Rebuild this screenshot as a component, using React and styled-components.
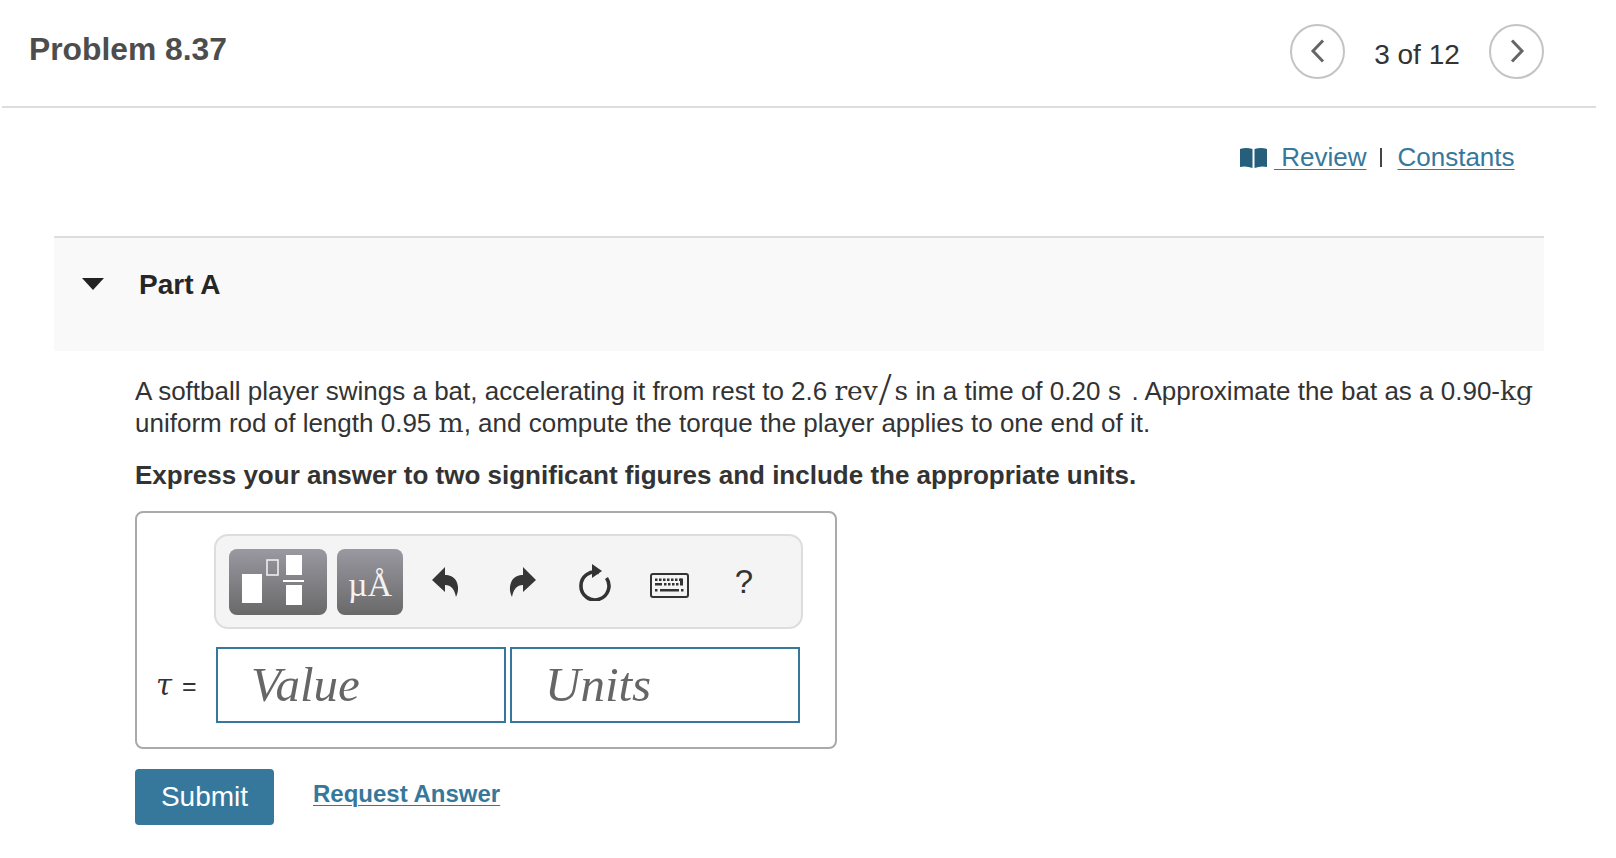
import React from 'react';
import styled, { createGlobalStyle } from 'styled-components';

const GlobalStyle = createGlobalStyle`
  html, body {
    margin: 0;
    padding: 0;
    background: #fff;
    font-family: "Liberation Sans", Arial, sans-serif;
    color: #333;
  }
`;

const Page = styled.div`
  width: 1616px;
  height: 858px;
  overflow: hidden;
`;

const Header = styled.header`
  margin-left: 2px;
  width: 1594px;
  height: 108px;
  box-sizing: border-box;
  border-bottom: 2px solid #ddd;
  padding: 24px 52px 0 27px;
  display: flex;
  justify-content: space-between;
  align-items: flex-start;
`;

const Title = styled.h1`
  margin: 7px 0 0;
  font-size: 31.8px;
  line-height: 36px;
  font-weight: 700;
  color: #4d4d4d;
`;

const Pager = styled.div`
  display: flex;
  align-items: center;
  height: 54px;
`;

const PagerText = styled.span`
  font-size: 28px;
  color: #333;
  width: 144px;
  text-align: center;
  padding-top: 7px;
`;

const RoundButton = styled.button`
  width: 55px;
  height: 55px;
  padding: 0;
  border: 2px solid #c4c4c4;
  border-radius: 50%;
  background: #fff;
  display: flex;
  align-items: center;
  justify-content: center;
`;

const LinkRow = styled.div`
  height: 128px;
  box-sizing: border-box;
  padding: 32px 0 0 1240px;
  display: flex;
  align-items: flex-start;
  font-size: 26px;
  line-height: 34px;
`;

const TextLink = styled.a`
  color: #36789b;
  text-decoration: underline;
  text-decoration-thickness: 1px;
  text-underline-offset: 3px;
`;

const Divider = styled.span`
  width: 2px;
  height: 19px;
  background: #444;
  margin: 8px 15px 0 14px;
`;

const PartHeader = styled.section`
  margin-left: 54px;
  width: 1490px;
  height: 115px;
  box-sizing: border-box;
  border-top: 2px solid #ddd;
  background: #f9f9f9;
  padding: 30px 0 0 28px;
  display: flex;
  align-items: flex-start;
`;

const Caret = styled.span`
  width: 0;
  height: 0;
  margin-top: 10px;
  border-left: 11px solid transparent;
  border-right: 11px solid transparent;
  border-top: 12px solid #222;
`;

const PartTitle = styled.h2`
  margin: 0 0 0 35px;
  font-size: 28px;
  line-height: 34px;
  font-weight: 700;
  color: #262626;
`;

const Content = styled.main`
  padding: 24px 0 0 135px;
  width: 1420px;
  box-sizing: border-box;
`;

const Paragraph = styled.p`
  margin: 0;
  font-size: 26px;
  line-height: 32px;
  color: #333;
  white-space: nowrap;
`;

const Instruction = styled(Paragraph)`
  margin-top: 20px;
  font-weight: 700;
`;

const MathUnit = styled.span`
  font-family: "DejaVu Serif", "Liberation Serif", serif;
  font-size: 26.5px;
  line-height: 20px;
  margin-right: ${(props) => props.$gap || 0}px;
`;

const Slash = styled.span`
  font-family: "Liberation Serif", serif;
  font-size: 46px;
  font-weight: 400;
  line-height: 20px;
  vertical-align: -5px;
  margin: 0 3px 0 1px;
`;

const AnswerBox = styled.div`
  margin-top: 20px;
  width: 702px;
  height: 238px;
  box-sizing: border-box;
  border: 2px solid #aaa;
  border-radius: 8px;
  padding: 21px 0 0 77px;
`;

const Toolbar = styled.div`
  width: 589px;
  height: 95px;
  box-sizing: border-box;
  border: 2px solid #ddd;
  border-radius: 14px;
  background: #f4f4f4;
  padding: 13px 0 0 13px;
  display: flex;
  align-items: flex-start;
`;

const TemplateButton = styled.div`
  width: ${(props) => props.$width}px;
  height: 66px;
  margin-right: 10px;
  border-radius: 8px;
  background: linear-gradient(#9a98a1, #696969);
  color: #fff;
  flex: none;
  display: flex;
  align-items: center;
  justify-content: center;
`;

const MicroLabel = styled.span`
  font-family: "Liberation Serif", serif;
  font-size: 34px;
  line-height: 36px;
  margin-top: 6px;
  color: #f3f3f3;
`;

const ToolIcon = styled.div`
  flex: none;
  width: ${(props) => props.$width}px;
  height: 66px;
  padding-top: ${(props) => props.$drop || 0}px;
  box-sizing: border-box;
  display: flex;
  align-items: center;
  justify-content: center;
`;

const HelpMark = styled.span`
  font-size: 33px;
  color: #333;
`;

const InputRow = styled.div`
  margin: 18px 0 0 -64px;
  display: flex;
  align-items: center;
`;

const SymbolLabel = styled.span`
  width: 66px;
  padding-left: 6px;
  box-sizing: border-box;
  font-size: 25px;
  line-height: 30px;
  color: #333;
  white-space: nowrap;
`;

const Tau = styled.i`
  font-family: "DejaVu Serif", serif;
  font-size: 29px;
  line-height: 30px;
  margin-right: 3px;
`;

const AnswerInput = styled.input`
  width: 290px;
  height: 76px;
  box-sizing: border-box;
  border: 2px solid #36789b;
  border-radius: 0;
  margin-right: 4px;
  padding: 0 0 2px 33px;
  background: #fff;
  font-family: "Liberation Serif", serif;
  font-style: italic;
  font-size: 49px;
  outline: none;

  &::placeholder {
    color: #666;
    opacity: 1;
  }
`;

const ActionRow = styled.div`
  margin-top: 20px;
  display: flex;
  align-items: flex-start;
`;

const SubmitButton = styled.button`
  width: 139px;
  height: 56px;
  border: 0;
  border-radius: 4px;
  background: #36789b;
  color: #fff;
  font-family: "Liberation Sans", Arial, sans-serif;
  font-size: 28px;
  padding: 0;
`;

const RequestLink = styled(TextLink)`
  margin: 9px 0 0 39px;
  font-size: 24px;
  line-height: 32px;
  font-weight: 700;
`;

const Chevron = ({ flip }) => (
  <svg width="18" height="28" viewBox="0 0 18 28" fill="none" stroke="#666" strokeWidth="3">
    <path d={flip ? 'M4 3.5 L14 14 L4 24.5' : 'M14 3.5 L4 14 L14 24.5'} />
  </svg>
);

const BookIcon = () => (
  <svg width="27" height="20" viewBox="0 0 27 20" fill="#265f7b" style={{ marginTop: 8, marginRight: 7 }}>
    <path d="M0 1 Q6 -1 12.5 1 V20 Q6 17.5 0 19 Z" />
    <path d="M14.5 1 Q21 -1 27 1 V19 Q21 17.5 14.5 20 Z" />
  </svg>
);

const FractionIcon = () => (
  <svg width="98" height="66" viewBox="0 0 98 66" fill="#fff">
    <rect x="13" y="25" width="20" height="29" />
    <rect x="38" y="11" width="11" height="15" fill="none" stroke="#eee" strokeWidth="1.6" />
    <rect x="57" y="6" width="16" height="20" />
    <rect x="54" y="31" width="21" height="2" />
    <rect x="57" y="36" width="16" height="20" />
  </svg>
);

const UndoIcon = ({ flip }) => (
  <svg
    width="28"
    height="34"
    viewBox="0 0 28 34"
    fill="#363636"
    style={flip ? { transform: 'scaleX(-1)' } : undefined}
  >
    <path d="M14 2 L1 15 L14 27 V20 C20 20 23.5 24 25 32 C27.5 27 28 21 25 15.5 C22.5 11.5 18.5 10 14 10 Z" />
  </svg>
);

const RefreshIcon = () => (
  <svg width="34" height="38" viewBox="0 0 34 38" fill="none">
    <path d="M21 9.5 A14 14 0 1 0 28.5 15" stroke="#333" strokeWidth="3.6" />
    <path d="M14 1 L24 8 L14 15 Z" fill="#333" />
  </svg>
);

const KeyboardIcon = () => (
  <svg width="39" height="25" viewBox="0 0 39 25" fill="#333">
    <rect x="1" y="1" width="37" height="23" rx="2" fill="none" stroke="#333" strokeWidth="2" />
    {[6, 10, 14, 18, 22, 26, 30].map((x) => (
      <rect key={x} x={x - 1} y="5.5" width="2.5" height="2.5" />
    ))}
    <rect x="5" y="10" width="7" height="2.5" />
    {[15, 19, 23, 27].map((x) => (
      <rect key={x} x={x - 1} y="10" width="2.5" height="2.5" />
    ))}
    <rect x="30" y="5.5" width="3" height="7" />
    <rect x="5" y="16" width="2.5" height="2.5" />
    <rect x="10" y="16" width="19" height="2.5" />
    <rect x="31" y="16" width="2.5" height="2.5" />
  </svg>
);

const App = () => (
  <Page>
    <GlobalStyle />
    <Header>
      <Title>Problem 8.37</Title>
      <Pager>
        <RoundButton aria-label="Previous">
          <Chevron />
        </RoundButton>
        <PagerText>3 of 12</PagerText>
        <RoundButton aria-label="Next">
          <Chevron flip />
        </RoundButton>
      </Pager>
    </Header>

    <LinkRow>
      <BookIcon />
      <TextLink href="#review">&nbsp;Review</TextLink>
      <Divider />
      <TextLink href="#constants">Constants</TextLink>
    </LinkRow>

    <PartHeader>
      <Caret />
      <PartTitle>Part A</PartTitle>
    </PartHeader>

    <Content>
      <Paragraph>
        A softball player swings a bat, accelerating it from rest to 2.6 <MathUnit>rev</MathUnit>
        <Slash>/</Slash>
        <MathUnit>s</MathUnit> in a time of 0.20 <MathUnit $gap={3}>s</MathUnit> . Approximate the bat as a 0.90-
        <MathUnit>kg</MathUnit>
        <br />
        uniform rod of length 0.95 <MathUnit>m</MathUnit>, and compute the torque the player applies to one end of it.
      </Paragraph>
      <Instruction>Express your answer to two significant figures and include the appropriate units.</Instruction>

      <AnswerBox>
        <Toolbar>
          <TemplateButton $width={98}>
            <FractionIcon />
          </TemplateButton>
          <TemplateButton $width={66}>
            <MicroLabel>µÅ</MicroLabel>
          </TemplateButton>
          <ToolIcon $width={64}>
            <UndoIcon />
          </ToolIcon>
          <ToolIcon $width={92}>
            <UndoIcon flip />
          </ToolIcon>
          <ToolIcon $width={52}>
            <RefreshIcon />
          </ToolIcon>
          <ToolIcon $width={96} $drop={6}>
            <KeyboardIcon />
          </ToolIcon>
          <ToolIcon $width={54}>
            <HelpMark>?</HelpMark>
          </ToolIcon>
        </Toolbar>

        <InputRow>
          <SymbolLabel>
            <Tau>τ</Tau> =
          </SymbolLabel>
          <AnswerInput placeholder="Value" />
          <AnswerInput placeholder="Units" />
        </InputRow>
      </AnswerBox>

      <ActionRow>
        <SubmitButton>Submit</SubmitButton>
        <RequestLink href="#answer">Request Answer</RequestLink>
      </ActionRow>
    </Content>
  </Page>
);

export default App;
